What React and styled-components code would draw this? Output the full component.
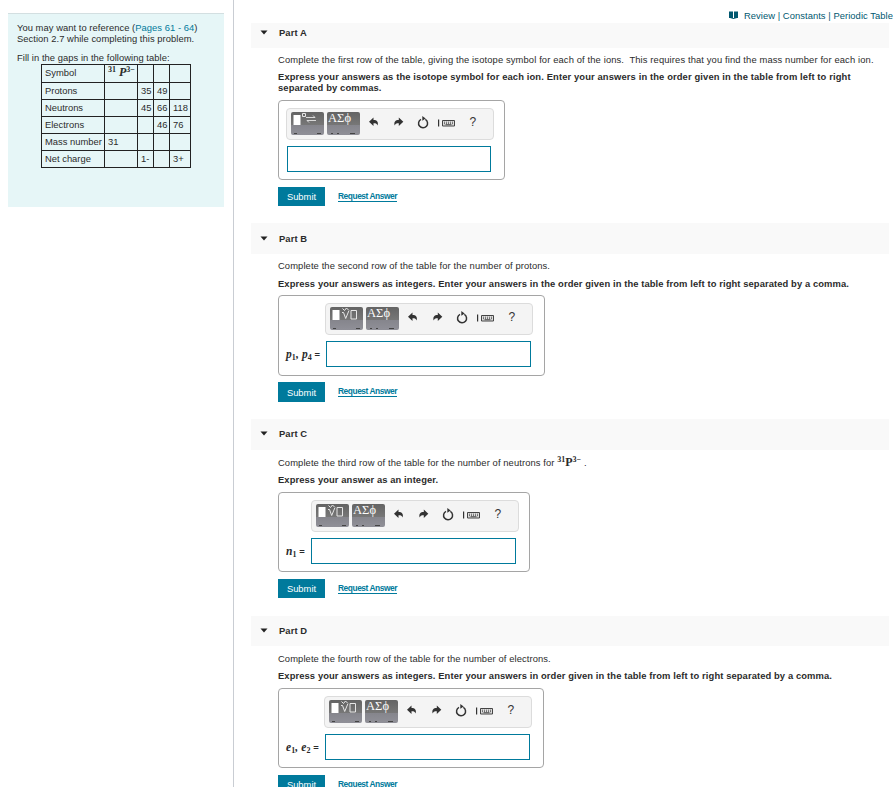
import styled, { createGlobalStyle } from 'styled-components';

const GlobalStyle = createGlobalStyle`
	* {
		box-sizing: border-box;
	}

	body {
		margin: 0;
		background: #fff;
		color: #2b2b2b;
		font-family: 'Liberation Sans', Arial, sans-serif;
		font-size: 9.4px;
		overflow: hidden;
	}
`;

const Page = styled.div`
	display: flex;
	height: 787px;
	overflow: hidden;
`;

const Sidebar = styled.aside`
	width: 234px;
	flex: none;
	padding: 13px 9px 0 8px;
	border-right: 1px solid #c9cdd3;
`;

const Hint = styled.div`
	height: 194px;
	padding: 8px 0 0 9px;
	border-top: 1px solid #d3dfe1;
	background: #e6f6f7;
	line-height: 11px;
	letter-spacing: 0.05px;
	white-space: nowrap;

	& p {
		margin: 0 0 8px;
	}

	& p + p {
		margin: 0;
	}
`;

const PageLink = styled.a`
	color: #007a9c;
`;

const GapTable = styled.table`
	margin: 1px 0 0 24px;
	width: 150px;
	table-layout: fixed;
	border-collapse: collapse;
	letter-spacing: 0;

	& td {
		height: 17px;
		padding: 0 0 1px 3px;
		border: 1px solid #222;
		line-height: 10px;
	}

	& tr:first-child td {
		height: 18px;
	}
`;

const Main = styled.main`
	flex: 1;
	min-width: 0;
	padding-left: 17px;
`;

const TopLinks = styled.nav`
	display: flex;
	justify-content: flex-end;
	align-items: center;
	height: 23px;
	padding: 7px 3px 0 0;
	color: #00576f;
	white-space: pre;
	letter-spacing: 0.06px;

	& svg {
		margin-right: 6px;
	}
`;

const Part = styled.section`
	height: ${({ $height }) => $height}px;
`;

const PartHeader = styled.header`
	display: flex;
	align-items: center;
	width: 638px;
	height: ${({ $height }) => $height}px;
	padding: 0 0 ${({ $lift }) => $lift || 0}px 9px;
	background: #f9f9f9;
	font-weight: bold;
	letter-spacing: 0.1px;

	& svg {
		margin-right: 11px;
	}
`;

const PartBody = styled.div`
	padding: ${({ $top }) => $top}px 0 0 27px;
	letter-spacing: ${({ $tracking }) => $tracking || 0.1}px;
`;

const Description = styled.p`
	margin: 0 0 ${({ $gap }) => $gap}px;
	height: 12px;
	line-height: 12px;
	white-space: pre;
`;

const Instruction = styled.p`
	margin: 0 0 ${({ $gap }) => $gap || 7}px;
	line-height: 11px;
	font-weight: bold;
	white-space: pre;
`;

const AnswerBox = styled.div`
	display: grid;
	grid-template-columns: ${({ $label }) => $label}px 208px;
	grid-template-rows: 32px 26px;
	row-gap: 6px;
	width: ${({ $width }) => $width}px;
	height: ${({ $height }) => $height}px;
	padding: 7px;
	border: 1px solid #a5a5a5;
	border-radius: 4px;
`;

const Toolbar = styled.div`
	grid-column: 2;
	display: flex;
	align-items: flex-start;
	padding: 3px 4px;
	border: 1px solid #dcdcdc;
	border-radius: 4px;
	background: #f4f4f4;
`;

const PaletteButton = styled.button`
	width: 33px;
	height: 23px;
	margin: 0 3px 0 0;
	padding: 0;
	border: 0;
	border-radius: 2px;
	background: linear-gradient(#646464 0, #777 13px, #85858c 13px, #909098 100%);
	overflow: hidden;

	& svg {
		display: block;
	}
`;

const ToolIcons = styled.svg`
	margin-left: 1px;
`;

const MathLabel = styled.div`
	font-family: 'Liberation Serif', serif;
	font-size: 11.5px;
	font-weight: bold;
	font-style: italic;
	line-height: 26px;
	white-space: pre;

	& sub {
		font-size: 8px;
		font-style: normal;
		line-height: 0;
		vertical-align: -2px;
	}

	& span {
		font-family: 'Liberation Sans', sans-serif;
		font-size: 9.4px;
		font-style: normal;
	}
`;

const AnswerInput = styled.input`
	grid-column: 2;
	width: ${({ $width }) => $width || 205}px;
	height: 26px;
	margin-left: ${({ $shift }) => $shift}px;
	padding: 0 4px;
	border: 1px solid #007a9c;
	border-radius: 0;
	background: #fff;
	outline: 0;
`;

const Actions = styled.div`
	display: flex;
	align-items: center;
	margin-top: ${({ $top }) => $top}px;
`;

const SubmitButton = styled.button`
	width: 47px;
	height: ${({ $height }) => $height}px;
	margin-right: 13px;
	padding: 0;
	border: 0;
	background: #007a9c;
	color: #fff;
	font: 9.4px 'Liberation Sans', sans-serif;
	letter-spacing: 0;
`;

const RequestLink = styled.a`
	height: 10px;
	border-bottom: 1px solid #007a9c;
	color: #007a9c;
	font-size: 8.4px;
	font-weight: bold;
	line-height: 9px;
	letter-spacing: -0.45px;
	white-space: nowrap;
`;

const Isotope = styled.span`
	font-family: 'Liberation Serif', serif;
	font-size: 12px;
	font-weight: bold;
	line-height: 0;
	letter-spacing: 0;

	& sup {
		font-size: 8px;
		font-style: normal;
		line-height: 0;
		vertical-align: 4px;
	}

	& em {
		font-style: ${({ $upright }) => ($upright ? 'normal' : 'italic')};
	}
`;

const BookIcon = () => (
	<svg width="9" height="8" viewBox="0 0 9 8">
		<path d="M0 .5h4v6.5H0zM5 .5h4v6.5H5z" fill="#00576f" />
		<path d="M1 7h7L4.5 8z" fill="#00576f" />
	</svg>
);

const Caret = () => (
	<svg width="8" height="5" viewBox="0 0 8 5">
		<path d="M.5 .5h7L4 4.5z" fill="#222" />
	</svg>
);

const TemplateGlyph = ({ arrows }) => (
	<svg width="33" height="23" viewBox="0 0 33 23">
		<path d="M2.500 3h7v10h-7z" fill="#fff" />
		{arrows ? (
			<g fill="none" stroke="#e4e4e4">
				<path d="M11.500 1.500h3v3h-3z" />
				<path d="M15 5.500h9l-2-2M25 8.500h-9l2 2" strokeWidth=".9" />
			</g>
		) : (
			<g fill="none" stroke="#e6e6e6">
				<path d="M12 5.500h1.500l2.200 6L19 3.500M12.500 1.500l2 2 2-2.500 2 2" />
				<path d="M21 3.500h5.500v8.500H21z" />
			</g>
		)}
		<path d="M3 21.500h3M26 21.500h4" stroke="#444" />
	</svg>
);

const GreekGlyph = () => (
	<svg width="33" height="23" viewBox="0 0 33 23">
		<text
			x="1"
			y="10"
			fill="#fff"
			opacity=".98"
			fontFamily="Liberation Serif, serif"
			fontSize="13"
			letterSpacing="0"
			textLength="23"
			lengthAdjust="spacingAndGlyphs"
		>
			ΑΣϕ
		</text>
		<path d="M4 21.500h2M10 21.500h2M23 21.500h5" stroke="#444" />
	</svg>
);

const Tools = () => (
	<ToolIcons width="120" height="24" viewBox="0 0 120 24">
		<g fill="#333">
			<path d="M5 9.800L9.500 5.500v2.600c3.600 0 5 2 4.200 5.400-.7-1.700-2-2.300-4.200-2.200v2.700z" />
			<path d="M39.300 9.800L34.800 5.500v2.600c-3.600 0-5 2-4.200 5.400.7-1.700 2-2.300 4.200-2.200v2.700z" />
			<path d="M58.300 4v4.800l3.400-2.400z" />
			<path d="M74 7.500h1.200v7H74z" />
		</g>
		<path d="M61.300 7.400A4.500 4.500 0 1 1 57 7.300" fill="none" stroke="#333" strokeWidth="1.500" />
		<path d="M78.500 8.500h12v5.500h-12z" fill="#ddd" stroke="#444" />
		<path d="M80 10.200h9M80 11.700h9" stroke="#555" strokeDasharray="1 1" />
		<path d="M81.500 12.700h6" stroke="#555" />
		<text x="105.500" y="14" fill="#333" fontFamily="Liberation Sans, sans-serif" fontSize="12">
			?
		</text>
	</ToolIcons>
);

const tableRows = [
	['Symbol', <Isotope key="p"><sup>31</sup> <em>P</em><sup>3−</sup></Isotope>, '', '', ''],
	['Protons', '', '35', '49', ''],
	['Neutrons', '', '45', '66', '118'],
	['Electrons', '', '', '46', '76'],
	['Mass number', '31', '', '', ''],
	['Net charge', '', '1-', '', '3+'],
];

const parts = [
	{
		id: 'A',
		height: 200,
		header: 25,
		lift: 7,
		top: 6,
		gap: 5,
		tracking: 0.125,
		description:
			'Complete the first row of the table, giving the isotope symbol for each of the ions.  This requires that you find the mass number for each ion.',
		instruction:
			'Express your answers as the isotope symbol for each ion. Enter your answers in the order given in the table from left to right\nseparated by commas.',
		label: null,
		labelWidth: 0,
		boxWidth: 227,
		boxHeight: 80,
		inputWidth: 204,
		shift: 1,
		actionsTop: 7,
		arrows: true,
	},
	{
		id: 'B',
		height: 196,
		header: 31,
		lift: 1,
		top: 6,
		gap: 6,
		boxGap: 6,
		description: 'Complete the second row of the table for the number of protons.',
		instruction:
			'Express your answers as integers. Enter your answers in the order given in the table from left to right separated by a comma.',
		label: <>p<sub>1</sub>, p<sub>4</sub><span> =</span></>,
		labelWidth: 39,
		boxWidth: 267,
		boxHeight: 81,
		shift: 1,
		actionsTop: 6,
	},
	{
		id: 'C',
		height: 197,
		header: 31,
		lift: 2,
		top: 7,
		gap: 5,
		description: (
			<>
				Complete the third row of the table for the number of neutrons for{' '}
				<Isotope $upright><sup>31</sup><em>P</em><sup>3−</sup></Isotope> .
			</>
		),
		instruction: 'Express your answer as an integer.',
		label: <>n<sub>1</sub><span> =</span></>,
		labelWidth: 25,
		boxWidth: 252,
		boxHeight: 80,
		shift: 0,
		actionsTop: 7,
	},
	{
		id: 'D',
		height: 171,
		header: 30,
		lift: 2,
		top: 7,
		gap: 5,
		description: 'Complete the fourth row of the table for the number of electrons.',
		instruction:
			'Express your answers as integers. Enter your answers in order given in the table from left to right separated by a comma.',
		label: <>e<sub>1</sub>, e<sub>2</sub><span> =</span></>,
		labelWidth: 38,
		boxWidth: 266,
		boxHeight: 80,
		shift: 1,
		actionsTop: 7,
	},
];

const QuestionPart = ({ part }) => (
	<Part $height={part.height}>
		<PartHeader $height={part.header} $lift={part.lift}>
			<Caret />
			Part {part.id}
		</PartHeader>
		<PartBody $top={part.top} $tracking={part.tracking}>
			<Description $gap={part.gap}>{part.description}</Description>
			<Instruction $gap={part.boxGap}>{part.instruction}</Instruction>
			<AnswerBox $label={part.labelWidth} $width={part.boxWidth} $height={part.boxHeight}>
				<Toolbar>
					<PaletteButton>
						<TemplateGlyph arrows={part.arrows} />
					</PaletteButton>
					<PaletteButton>
						<GreekGlyph />
					</PaletteButton>
					<Tools />
				</Toolbar>
				{part.label && <MathLabel>{part.label}</MathLabel>}
				<AnswerInput $shift={part.shift} $width={part.inputWidth} />
			</AnswerBox>
			<Actions $top={part.actionsTop}>
				<SubmitButton $height={part.id === 'B' ? 20 : 19}>Submit</SubmitButton>
				<RequestLink>Request Answer</RequestLink>
			</Actions>
		</PartBody>
	</Part>
);

const App = () => (
	<>
		<GlobalStyle />
		<Page>
			<Sidebar>
				<Hint>
					<p>
						You may want to reference (<PageLink>Pages 61 - 64</PageLink>)<br />
						Section 2.7 while completing this problem.
					</p>
					<p>Fill in the gaps in the following table:</p>
					<GapTable>
						<colgroup>
							<col style={{ width: 63 }} />
							<col style={{ width: 33 }} />
							<col style={{ width: 16 }} />
							<col style={{ width: 16 }} />
							<col style={{ width: 21 }} />
						</colgroup>
						<tbody>
							{tableRows.map((cells) => (
								<tr key={cells[0]}>
									{cells.map((cell, index) => (
										<td key={index}>{cell}</td>
									))}
								</tr>
							))}
						</tbody>
					</GapTable>
				</Hint>
			</Sidebar>
			<Main>
				<TopLinks>
					<BookIcon />
					Review | Constants | Periodic Table
				</TopLinks>
				{parts.map((part) => (
					<QuestionPart key={part.id} part={part} />
				))}
			</Main>
		</Page>
	</>
);

export default App;
